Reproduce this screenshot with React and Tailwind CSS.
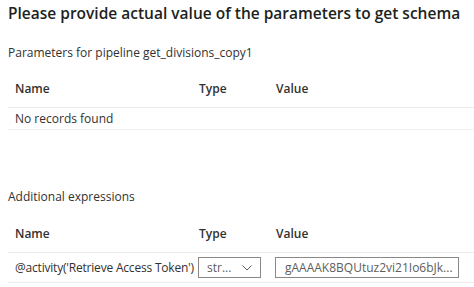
import React from 'react';

const font = { fontFamily: '"Open Sans", "Noto Sans", sans-serif' };

function HeaderRow({ h, pt }) {
  return (
    <div className={`flex items-center border-b border-[#edebe9] text-[12px] font-semibold text-[#323130] ${h} ${pt}`}>
      <div className="w-[190px] pl-[7px]">Name</div>
      <div className="w-[77px] pl-[1px]">Type</div>
      <div className="flex-1 pl-[1px]">Value</div>
    </div>
  );
}

export default function App() {
  return (
    <div className="h-[287px] w-[474px] overflow-hidden bg-white pl-[8px] text-[#323130]" style={font}>
      <h1 className="pt-[1px] text-[15.5px] leading-[24px] font-semibold whitespace-nowrap text-[#201f1e]">
        Please provide actual value of the parameters to get schema
      </h1>

      <p className="mt-[18px] text-[12px] leading-[20px]">Parameters for pipeline get_divisions_copy1</p>

      <HeaderRow h="h-[45px]" pt="pt-[7px]" />
      <div className="flex h-[22px] items-center border-b border-[#f3f2f1] pt-[1px] pl-[7px] text-[12px]">
        No records found
      </div>

      <p className="mt-[57px] text-[12px] leading-[20px]">Additional expressions</p>

      <HeaderRow h="h-[46px]" pt="pt-[8px]" />
      <div className="flex h-[30px] items-center border-b border-[#edebe9] text-[12px]">
        <div className="w-[190px] pl-[7px] whitespace-nowrap tracking-[-0.2px]">@activity('Retrieve Access Token')</div>
        <div className="w-[77px]">
          <div className="flex h-[21px] w-[63px] items-center justify-between border border-[#8a8886] pl-[8px] pr-[8px] text-[#605e5c]">
            <span>str...</span>
            <svg width="10" height="6" viewBox="0 0 10 6" fill="none">
              <path d="M0.5 0.5L5 5L9.5 0.5" stroke="#605e5c" strokeWidth="1" />
            </svg>
          </div>
        </div>
        <div className="flex-1">
          <div className="flex h-[21px] w-[184px] items-center border border-[#8a8886] pl-[9px] whitespace-nowrap text-[#605e5c]">
            gAAAAK8BQUtuz2vi21Io6bJk...
          </div>
        </div>
      </div>
    </div>
  );
}
